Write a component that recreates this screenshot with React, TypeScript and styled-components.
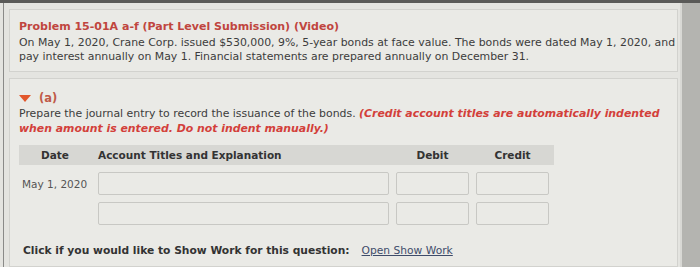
import { FC } from 'react';
import styled, { createGlobalStyle } from 'styled-components';

const GlobalStyle = createGlobalStyle`
    html, body {
        margin: 0;
        padding: 0;
        background: #e4e4e0;
    }
    body {
        font-family: 'DejaVu Sans', Verdana, sans-serif;
        color: #3a3a3a;
    }
`;

const rows = [{ date: 'May 1, 2020' }, { date: '' }];

const App: FC = () => (
    <>
        <GlobalStyle />
        <Screen>
            <TopBar />
            <Body>
                <Page>
                    <Panel>
                        <Title>
                            Problem 15-01A a-f (Part Level Submission) (Video)
                        </Title>
                        <Text>
                            On May 1, 2020, Crane Corp. issued $530,000, 9%,
                            5-year bonds at face value. The bonds were dated May
                            1, 2020, and pay interest annually on May 1.
                            Financial statements are prepared annually on
                            December 31.
                        </Text>
                    </Panel>
                    <Panel $open>
                        <PartHeading>
                            <Caret />
                            (a)
                        </PartHeading>
                        <Text $loose>
                            Prepare the journal entry to record the issuance of
                            the bonds.{' '}
                            <Note>
                                (Credit account titles are automatically
                                indented when amount is entered. Do not indent
                                manually.)
                            </Note>
                        </Text>
                        <Journal>
                            <HeadRow>
                                <HeadCell $align="center">Date</HeadCell>
                                <HeadCell>Account Titles and Explanation</HeadCell>
                                <HeadCell $align="center">Debit</HeadCell>
                                <HeadCell $align="center">Credit</HeadCell>
                            </HeadRow>
                            {rows.map((row, i) => (
                                <EntryRow key={i}>
                                    <DateCell>{row.date}</DateCell>
                                    <Field />
                                    <Field />
                                    <Field />
                                </EntryRow>
                            ))}
                        </Journal>
                        <ShowWork>
                            Click if you would like to Show Work for this
                            question:
                            <Link href="#">Open Show Work</Link>
                        </ShowWork>
                    </Panel>
                </Page>
                <Scrollbar />
            </Body>
        </Screen>
    </>
);

export default App;

const Screen = styled.div`
    width: 700px;
    height: 267px;
    overflow: hidden;
    display: flex;
    flex-direction: column;
`;
const TopBar = styled.div`
    height: 3px;
    background: #5a5a58;
    flex-shrink: 0;
`;
const Body = styled.div`
    flex: 1;
    display: flex;
    border-left: 1px solid #8a8a88;
    margin-left: 3px;
`;
const Page = styled.div`
    flex: 1;
    padding: 6px 2px 0 5px;
    display: flex;
    flex-direction: column;
    gap: 6px;
`;
const Scrollbar = styled.div`
    width: 20px;
    background: linear-gradient(to right, #d8d8d4 0 2px, #b4b4b0 2px);
`;
const Panel = styled.section<{ $open?: boolean }>`
    background: #eaeae6;
    border: 1px solid #d2d2ce;
    padding: ${(p) => (p.$open ? '12px 1px 0 9px' : '10px 0 7px 9px')};
    ${(p) => p.$open && 'flex: 1;'}
`;
const Title = styled.h1`
    margin: 0 0 3px;
    font-size: 11px;
    font-weight: bold;
    color: #c0453e;
`;
const Text = styled.p<{ $loose?: boolean }>`
    margin: 0;
    font-size: 10.9px;
    line-height: ${(p) => (p.$loose ? '15px' : '14px')};
    color: #3c3c3c;
`;
const Note = styled.em`
    font-weight: bold;
    color: #d3403a;
`;
const PartHeading = styled.div`
    display: flex;
    align-items: center;
    gap: 8px;
    font-size: 11.5px;
    font-weight: bold;
    color: #c05a48;
    margin-bottom: 1px;
`;
const Caret = styled.span`
    width: 0;
    height: 0;
    border-left: 6px solid transparent;
    border-right: 6px solid transparent;
    border-top: 7px solid #e2572c;
`;
const Journal = styled.div`
    width: 535px;
    margin-top: 9px;
    display: flex;
    flex-direction: column;
    gap: 7px;
`;
const grid = `
    display: grid;
    grid-template-columns: 72px 291px 73px 73px;
    column-gap: 7px;
    align-items: center;
`;
const HeadRow = styled.div`
    ${grid}
    height: 20px;
    background: #d7d7d3;
`;
const HeadCell = styled.div<{ $align?: 'center' }>`
    font-size: 10.5px;
    font-weight: bold;
    color: #333;
    text-align: ${(p) => p.$align ?? 'left'};
`;
const EntryRow = styled.div`
    ${grid}
`;
const DateCell = styled.div`
    font-size: 10.5px;
    color: #555;
    padding-left: 3px;
`;
const Field = styled.div`
    height: 21px;
    border: 1px solid #c8c8c4;
    border-radius: 2px;
    background: #eaeae6;
`;
const ShowWork = styled.p`
    margin: 19px 0 0 4px;
    font-size: 10.7px;
    font-weight: bold;
    color: #333;
`;
const Link = styled.a`
    margin-left: 12px;
    font-weight: normal;
    color: #3e4c6a;
    text-decoration: underline;
`;
